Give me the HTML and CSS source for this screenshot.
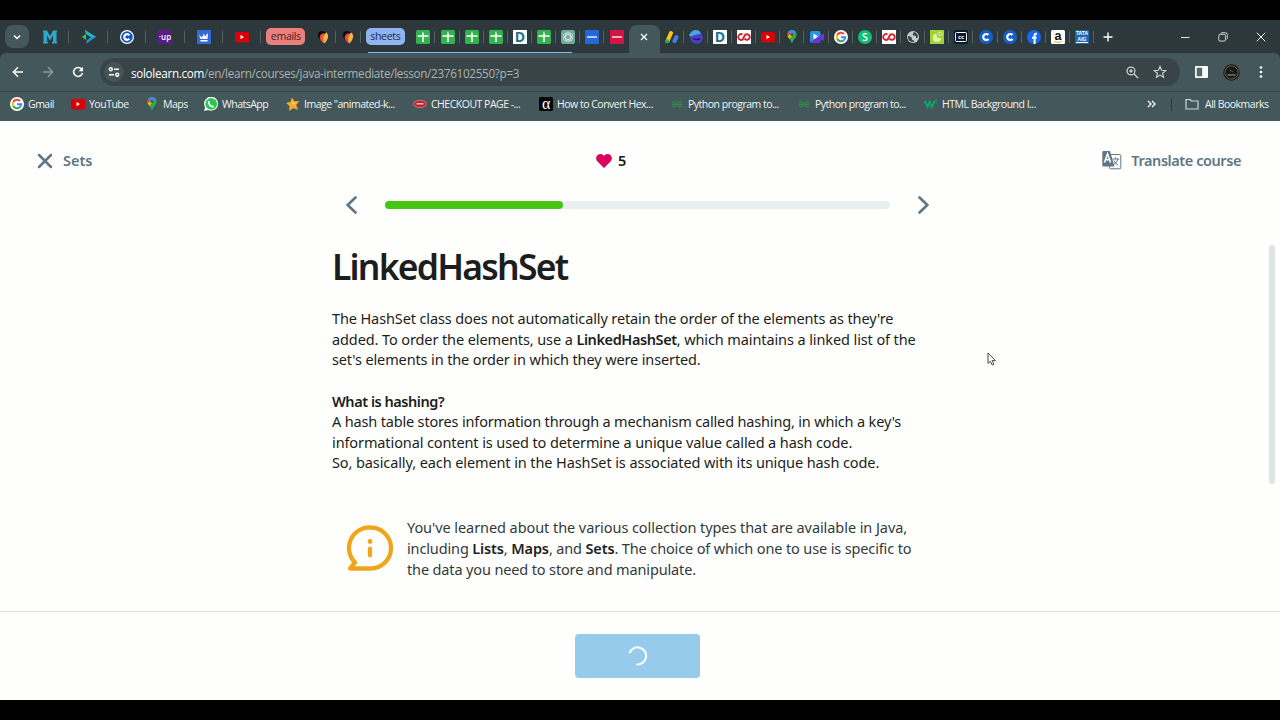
FILE: index.html
```html
<!DOCTYPE html>
<html lang="en">
<head>
  <meta charset="UTF-8" />
  <meta name="viewport" content="width=device-width, initial-scale=1" />
  <title>LinkedHashSet</title>
  <link rel="stylesheet" href="styles.css">
</head>
<body>

  <!-- shared icons -->
  <svg class="defs" width="0" height="0">
    <symbol id="sheet" viewBox="0 0 14 14">
      <rect width="14" height="14" rx="1.5" fill="#34b24e"/>
      <path d="M7 2.500v9.500M1.500 5.900h11" stroke="#fff" stroke-width="1.500"/>
    </symbol>
    <symbol id="co" viewBox="0 0 14 14">
      <rect width="14" height="14" fill="#fff"/>
      <path d="M5.500 4.300A3 3 0 1 0 5.500 9.700L8 5A2.800 2.800 0 1 1 7.600 8.600" fill="none" stroke="#d5222b" stroke-width="1.900"/>
    </symbol>
    <symbol id="yt" viewBox="0 0 14 14">
      <rect y="2" width="14" height="10.400" rx="1.500" fill="#d90007"/>
      <path d="M5.500 5v4.200L9 7.100z" fill="#fff"/>
    </symbol>
    <symbol id="pin" viewBox="0 0 14 14">
      <path d="M7 0a4.600 4.600 0 0 0-4.600 4.600C2.400 8 6 9.500 7 14c1-4.500 4.600-6 4.600-9.400A4.600 4.600 0 0 0 7 0z" fill="#34a853"/>
      <path d="M7 0a4.600 4.600 0 0 0-4 2.300L7 5l3.800-3A4.600 4.600 0 0 0 7 0z" fill="#4285f4"/>
      <path d="M3 2.300a4.600 4.600 0 0 0-.3 4L5.600 3.900z" fill="#ea4335"/>
      <path d="M2.700 6.300c.3.900 1 1.700 1.600 2.500L9 4.500 7 3z" fill="#fbbc04"/>
      <circle cx="7" cy="4.600" r="1.600" fill="#41575a"/>
    </symbol>
    <symbol id="google" viewBox="0 0 14 14">
      <circle cx="7" cy="7" r="7" fill="#fff"/>
      <g fill="none" stroke-width="2">
        <path d="M10 4A4.200 4.200 0 0 0 3.300 5" stroke="#ea4335"/>
        <path d="M3.300 5a4.200 4.200 0 0 0 0 4" stroke="#fbbc04"/>
        <path d="M3.300 9A4.200 4.200 0 0 0 9.800 10.200" stroke="#34a853"/>
        <path d="M9.800 10.200A4.200 4.200 0 0 0 11.200 7.200H7" stroke="#4285f4"/>
      </g>
    </symbol>
    <symbol id="flame" viewBox="0 0 14 14">
      <path d="M6 11C1 8 1 3 4 1.500c2-1 4-.5 5 1z" fill="#090909"/>
      <path d="M8 13.500C2.500 9.500 3 6 5.500 4c1.500-1 3-1 4 1l-1 6z" fill="#e94f3d"/>
      <path d="M8.300 13.500C6.500 9 7 5 10.500 2.500c3 3 1.500 7.500-2.200 11z" fill="#f6b73e"/>
    </symbol>
    <symbol id="cc" viewBox="0 0 14 14">
      <circle cx="7" cy="7" r="7" fill="#1560c8"/>
      <path d="M9.500 5A3 3 0 1 0 9.500 9" fill="none" stroke="#fff" stroke-width="2.200"/>
    </symbol>
    <symbol id="gfg" viewBox="0 0 14 14">
      <path d="M2.200 5.600Q3.200 4.600 4.600 5T6.400 7.300H1.600M2 9.300q3.500 1.300 4.400-2M11.800 5.600Q10.800 4.600 9.400 5T7.600 7.300h4.800M12 9.300q-3.500 1.300-4.400-2" fill="none" stroke="#2f8d46" stroke-width="1.200"/>
    </symbol>
  </svg>

  <div class="browser">
    <div class="tabstrip">
      <div class="tab-search"><svg width="10" height="10" viewBox="0 0 10 10"><path d="M2 3.500l3 3 3-3" fill="none" stroke="#fff" stroke-width="1.500"/></svg></div>

      <div class="pinned">
        <div class="tab"><svg viewBox="0 0 14 14"><path d="M0 .5h4L7 6l3-5.500h4V2.300h-.5v9.400h.5v1.800H9V11.700h1V5.500L7 10.500 4 5.500v6.200h1v1.800H0v-1.800h.5V2.300H0z" fill="#2fa7c6"/></svg></div>
        <div class="tab"><svg viewBox="0 0 14 14"><path d="M3 0l11 7L4 14l1-4 4-3-5-3z" fill="#1f8fd0"/><path d="M3 0l11 7H9L4 4z" fill="#27b5c0"/><path d="M0 7l4-3v6z" fill="#37cf4b"/></svg></div>
        <div class="tab"><svg viewBox="0 0 14 14"><circle cx="7" cy="7" r="7" fill="#fff"/><circle cx="7" cy="7" r="5.800" fill="#1652c4"/><path d="M9.300 5.300A2.800 2.800 0 1 0 9.300 8.700" fill="none" stroke="#fff" stroke-width="2.200"/></svg></div>
        <div class="tab"><svg viewBox="0 0 14 14"><rect width="14" height="14" fill="#5b1a86"/><text x="7" y="9.500" text-anchor="middle" font-size="8" font-weight="600" fill="#fff">·up</text></svg></div>
        <div class="tab"><svg viewBox="0 0 14 14"><rect width="14" height="14" fill="#3668d6"/><path d="M2 4.500l3 3 2-4 1 3 3-3.500L10.500 9h-7zM3.500 10h7v1.500h-7z" fill="#fff"/></svg></div>
        <div class="tab"><svg viewBox="0 0 14 14"><use href="#yt"/></svg></div>
      </div>

      <div class="chip chip-red">emails</div>
      <div class="group">
        <div class="tab"><svg viewBox="0 0 14 14"><use href="#flame"/></svg></div>
        <div class="tab"><svg viewBox="0 0 14 14"><use href="#flame"/></svg></div>
      </div>

      <div class="chip chip-blue">sheets</div>
      <div class="group sheets">
        <div class="tab"><svg viewBox="0 0 14 14"><use href="#sheet"/></svg></div>
        <div class="tab"><svg viewBox="0 0 14 14"><use href="#sheet"/></svg></div>
        <div class="tab"><svg viewBox="0 0 14 14"><use href="#sheet"/></svg></div>
        <div class="tab"><svg viewBox="0 0 14 14"><use href="#sheet"/></svg></div>
        <div class="tab"><div class="letter-d">D</div></div>
        <div class="tab"><svg viewBox="0 0 14 14"><use href="#sheet"/></svg></div>
        <div class="tab"><svg viewBox="0 0 14 14"><rect width="14" height="14" rx="2" fill="#74aa9c"/><g fill="none" stroke="#e4f2ee" stroke-width=".7"><ellipse cx="7" cy="7" rx="2.400" ry="5"/><ellipse cx="7" cy="7" rx="2.400" ry="5" transform="rotate(60 7 7)"/><ellipse cx="7" cy="7" rx="2.400" ry="5" transform="rotate(120 7 7)"/></g></svg></div>
        <div class="tab"><svg viewBox="0 0 14 14"><rect width="14" height="14" rx="1" fill="#2368d8"/><path d="M2 7h10" stroke="#d5e5ff" stroke-width="1.600"/></svg></div>
        <div class="tab last"><svg viewBox="0 0 14 14"><rect width="14" height="14" rx="1" fill="#d21447"/><path d="M2 7h10" stroke="#ffd5df" stroke-width="1.600"/></svg></div>
      </div>

      <div class="tab-active"><svg width="8" height="8" viewBox="0 0 8 8"><path d="M1 1l6 6M7 1L1 7" stroke="#fff" stroke-width="1.300"/></svg></div>

      <div class="group rest">
        <div class="tab"><svg viewBox="0 0 14 14"><path d="M2.500 11L6 3" stroke="#fbc51c" stroke-width="4" stroke-linecap="round"/><path d="M9.500 11l2-4" stroke="#3f7ee8" stroke-width="4" stroke-linecap="round"/><circle cx="2.300" cy="11.300" r="2" fill="#34a853"/></svg></div>
        <div class="tab"><svg viewBox="0 0 14 14"><circle cx="7.500" cy="7.500" r="6.300" fill="#4a40c4"/><path d="M0 6c1-4 4-6 7-6 2 0 4 1 5 3-2 2-4 1-6 2-2 .5-3 2-6 1z" fill="#4aa4e4"/><path d="M4.500 8.500c2 1.500 4 1.500 6.500 0" stroke="#151c66" stroke-width="1.500" fill="none"/></svg></div>
        <div class="tab"><div class="letter-d">D</div></div>
        <div class="tab"><svg viewBox="0 0 14 14"><use href="#co"/></svg></div>
        <div class="tab"><svg viewBox="0 0 14 14"><use href="#yt"/></svg></div>
        <div class="tab"><svg viewBox="0 0 14 14"><use href="#pin"/></svg></div>
        <div class="tab"><svg viewBox="0 0 14 14"><rect y="1" width="10.500" height="12" rx="2" fill="#2795e0"/><path d="M1 13q-1-1 1-2l12-8v8l-3-1.500-1.500 3.500z" fill="#6a35d6"/><path d="M3.500 3.500v6L8 6.500z" fill="#fff"/></svg></div>
        <div class="tab"><svg viewBox="0 0 14 14"><use href="#google"/></svg></div>
        <div class="tab"><svg viewBox="0 0 14 14"><circle cx="7" cy="7" r="7" fill="#13c073"/><text x="7" y="10.800" text-anchor="middle" font-size="10.500" font-weight="600" fill="#fff">S</text></svg></div>
        <div class="tab"><svg viewBox="0 0 14 14"><use href="#co"/></svg></div>
        <div class="tab"><svg viewBox="0 0 14 14"><circle cx="7" cy="7" r="6" fill="#c3cbcc"/><path d="M7 2c2 1-1 1.500 0 3s3 0 3 2 1 1 2 0c0-3-2-5-5-5zM2 6c2 0 4 1 4 3s2 0 2 3C4 12 1.500 10 2 6z" fill="#38474a"/></svg></div>
        <div class="tab"><svg viewBox="0 0 14 14"><rect width="14" height="14" fill="#a2d13a"/><path d="M6.500 3.500a4.300 4.300 0 1 0 4.800 4.800L7 7.500z" fill="#e2f4a4"/><circle cx="10.300" cy="3.700" r="1.700" fill="none" stroke="#e2f4a4"/></svg></div>
        <div class="tab"><svg viewBox="0 0 14 14"><rect width="14" height="14" rx="2" fill="#0b1a33"/><rect x="1.500" y="2.500" width="11" height="9" rx="1" fill="none" stroke="#fff"/><text x="7" y="9" text-anchor="middle" font-size="6" font-weight="700" fill="#fff">cc</text></svg></div>
        <div class="tab"><svg viewBox="0 0 14 14"><use href="#cc"/></svg></div>
        <div class="tab"><svg viewBox="0 0 14 14"><use href="#cc"/></svg></div>
        <div class="tab"><svg viewBox="0 0 14 14"><circle cx="7" cy="7" r="7" fill="#1668ee"/><path d="M10 3.800H9c-1.200 0-1.400.7-1.400 1.600V14M5 7.700h4.600" fill="none" stroke="#fff" stroke-width="2"/></svg></div>
        <div class="tab"><svg viewBox="0 0 14 14"><rect width="14" height="14" rx="1.500" fill="#fff"/><text class="small-logo" x="7" y="10" text-anchor="middle" font-size="12.500" font-weight="700" fill="#111">a</text><path d="M3 11.500q4 2 8 0" fill="none" stroke="#f2a73a"/></svg></div>
        <div class="tab"><svg viewBox="0 0 14 14"><rect width="14" height="14" fill="#1f68ad"/><text class="small-logo" text-anchor="middle" font-size="5" font-weight="700" fill="#fff"><tspan x="7" y="5">TATA</tspan><tspan x="7" y="10.600">AIG</tspan></text><path d="M1 12.500h12" stroke="#fff"/></svg></div>
      </div>

      <svg class="new-tab" width="10" height="10" viewBox="0 0 10 10"><path d="M5 .5v9M.5 5h9" stroke="#fff" stroke-width="1.400"/></svg>

      <div class="window-controls">
        <svg width="10" height="10" viewBox="0 0 10 10"><path d="M1 5.500h8.500" stroke="#dfe5e5"/></svg>
        <svg width="10" height="10" viewBox="0 0 10 10" fill="none" stroke="#dfe5e5" stroke-width=".9"><rect x=".8" y="2.300" width="6.600" height="6.800" rx="1.200"/><path d="M2.800 1.500q.3-.8 1.200-.8h3.500q1.800 0 1.800 1.800v3.700q0 .9-.8 1.200"/></svg>
        <svg width="10" height="10" viewBox="0 0 10 10"><path d="M.8.800l8.400 8.400M9.200.8L.8 9.200" stroke="#edf1f1"/></svg>
      </div>
    </div>

    <div class="toolbar">
      <div class="nav-buttons">
        <svg viewBox="0 0 12 12"><path d="M11 6H1.500M6 1.200L1.300 6 6 10.800" fill="none" stroke="#fff" stroke-width="1.400"/></svg>
        <svg viewBox="0 0 12 12"><path d="M1 6h9.500M6 1.200L10.700 6 6 10.800" fill="none" stroke="#8c999a" stroke-width="1.400"/></svg>
        <svg viewBox="0 0 12 12"><path d="M9.800 3.300A4.500 4.500 0 1 0 10.500 7" fill="none" stroke="#fff" stroke-width="1.500"/><path d="M11 .8v4.400H6.600z" fill="#fff"/></svg>
      </div>
      <div class="omnibox">
        <div class="site-info"><svg width="12" height="12" viewBox="0 0 12 12" fill="none" stroke="#fff" stroke-width="1.400"><circle cx="2.800" cy="3.300" r="1.500"/><path d="M6 3.300h5M1 8.700h5"/><circle cx="9.200" cy="8.700" r="1.500"/></svg></div>
        <div class="url"><span>sololearn.com</span>/en/learn/courses/java-intermediate/lesson/2376102550?p=3</div>
        <svg class="zoom-icon" width="13" height="13" viewBox="0 0 13 13" fill="none" stroke="#cad1d2" stroke-width="1.300"><circle cx="5" cy="5" r="3.900"/><path d="M8 8l4.300 4.300M5 3.300v3.400M3.300 5h3.400"/></svg>
        <svg width="14" height="14" viewBox="0 0 14 14"><path d="M7 1.500l1.600 3.800 4.200.3-3.200 2.700 1 4L7 10.100l-3.600 2.200 1-4L1.200 5.600l4.200-.3z" fill="none" stroke="#cad1d2" stroke-width="1.200"/></svg>
      </div>
      <div class="actions">
        <svg width="13" height="12" viewBox="0 0 13 12"><rect width="13" height="12" rx="1" fill="#fff"/><rect x="1.700" y="1.700" width="5.500" height="8.600" fill="#53676b"/></svg>
        <svg width="17" height="17" viewBox="0 0 17 17"><circle cx="8.500" cy="8.500" r="8.200" fill="#17191a"/><circle cx="8.500" cy="8.500" r="6.600" fill="none" stroke="#71682c"/><path d="M4.500 11h8" stroke="#a8a68a"/><path d="M7 6l3 2" stroke="#625d2c"/></svg>
        <svg width="4" height="12" viewBox="0 0 4 12" fill="#fff"><circle cx="2" cy="1.500" r="1.300"/><circle cx="2" cy="6" r="1.300"/><circle cx="2" cy="10.500" r="1.300"/></svg>
      </div>
    </div>

    <div class="bookmarks">
      <div class="bookmark"><svg viewBox="0 0 14 14"><use href="#google"/></svg>Gmail</div>
      <div class="bookmark"><svg viewBox="0 0 14 14"><use href="#yt"/></svg>YouTube</div>
      <div class="bookmark"><svg viewBox="0 0 14 14"><use href="#pin"/></svg>Maps</div>
      <div class="bookmark"><svg viewBox="0 0 14 14"><path d="M0 14l1.200-3.500A7 7 0 1 1 4 13z" fill="#fff"/><circle cx="7.200" cy="6.900" r="5.900" fill="#2bc54f"/><path d="M4.800 4c-1 3 2 6 5 5.600" fill="none" stroke="#fff" stroke-width="1.800"/></svg>WhatsApp</div>
      <div class="bookmark"><svg viewBox="0 0 14 14"><path d="M6 .5l2.400 3.700 5-.2-3.200 4 1.800 4.800-4.800-1.500-4 2.700.2-5L0 6l4.500-1.200z" fill="#f5ad29"/><path d="M6 3l1.500 3 3 .3-4 1.500z" fill="#ffd969"/></svg>Image "animated-k...</div>
      <div class="bookmark"><svg viewBox="0 0 14 14"><ellipse cx="7" cy="7" rx="6.700" ry="4" fill="#d9868d"/><ellipse cx="7" cy="7" rx="6" ry="3.300" fill="#c3202c"/><path d="M3.500 6.800h7" stroke="#f0c5c9" stroke-width="1.400"/></svg>CHECKOUT PAGE -...</div>
      <div class="bookmark"><div class="alpha">α</div>How to Convert Hex...</div>
      <div class="bookmark"><svg viewBox="0 0 14 14"><use href="#gfg"/></svg><span class="pull">Python program to...</span></div>
      <div class="bookmark"><svg viewBox="0 0 14 14"><use href="#gfg"/></svg><span class="pull">Python program to...</span></div>
      <div class="bookmark"><svg viewBox="0 0 14 14"><path d="M.8 4l2.700 6 2-5 2.300 5L10.500 4" fill="none" stroke="#0aa66b" stroke-width="2"/><path d="M11 3h2l-1 1.500q1.500.5 0 2" fill="none" stroke="#0aa66b" stroke-width=".8"/></svg>HTML Background I...</div>
      <svg class="more" width="9" height="8" viewBox="0 0 9 8"><path d="M1 1l3 3-3 3M5 1l3 3-3 3" fill="none" stroke="#fff" stroke-width="1.300"/></svg>
      <div class="divider"></div>
      <div class="bookmark all"><svg viewBox="0 0 14 14"><path d="M1 2.500h4L6.500 4H13v8H1z" fill="none" stroke="#d3dadb" stroke-width="1.200"/></svg>All Bookmarks</div>
    </div>

    <div class="page">
      <div class="course-header">
        <div class="back">
          <svg width="16" height="16" viewBox="0 0 16 16"><path d="M2 2l12 12M14 2L2 14" stroke="#607585" stroke-width="2.500" stroke-linecap="round"/></svg>
          <span>Sets</span>
        </div>
        <div class="hearts">
          <svg width="16" height="14" viewBox="0 0 16 14"><path d="M8 14L1.500 7.500C-1.500 4 1 0 4.500 0 6 0 7.300.8 8 2c.7-1.200 2-2 3.500-2C15 0 17.500 4 14.500 7.500z" fill="#d9035b"/></svg>
          <span>5</span>
        </div>
        <div class="translate">
          <svg width="20" height="19" viewBox="0 0 20 19"><rect x="7.500" y="3.500" width="11.300" height="14.300" rx="1" fill="none" stroke="#607585"/><path d="M1.500 0H8l4.500 15.500h-11Q.3 15.500.3 14V1.500Q.3 0 1.500 0z" fill="#607585"/><path d="M2.500 11.500l3-8.500 3 8.500M3.700 8.800h3.700" fill="none" stroke="#fefffa" stroke-width="1.600"/><path d="M10.500 8h6.500M13.500 6.500V8M16 8q-1 4-5 6M12 9.500q1 3 4 4.500" fill="none" stroke="#607585"/></svg>
          <span>Translate course</span>
        </div>
      </div>

      <div class="progress-row">
        <svg width="12" height="18" viewBox="0 0 12 18"><path d="M9.500 1.500L1.700 9l7.800 7.500" fill="none" stroke="#607585" stroke-width="2.600" stroke-linecap="round"/></svg>
        <div class="progress"><div class="progress-fill"></div></div>
        <svg width="12" height="18" viewBox="0 0 12 18"><path d="M2.500 1.500L10.300 9l-7.800 7.500" fill="none" stroke="#607585" stroke-width="2.600" stroke-linecap="round"/></svg>
      </div>

      <div class="lesson">
        <h1>LinkedHashSet</h1>
        <p>
          <span class="line l1">The HashSet class does not automatically retain the order of the elements as they're</span>
          <span class="line l2">added. To order the elements, use a <b>LinkedHashSet</b>, which maintains a linked list of the</span>
          <span class="line l3">set's elements in the order in which they were inserted.</span>
        </p>
        <p>
          <span class="line l4"><b>What is hashing?</b></span>
          <span class="line l5">A hash table stores information through a mechanism called hashing, in which a key's</span>
          <span class="line l6">informational content is used to determine a unique value called a hash code.</span>
          <span class="line l7">So, basically, each element in the HashSet is associated with its unique hash code.</span>
        </p>
        <div class="note">
          <svg width="48" height="48" viewBox="0 0 48 48"><path d="M24.500 3.500A20.500 20.500 0 1 1 24.500 44.500H4L9 38.500A20.500 20.500 0 0 1 24.500 3.500z" fill="none" stroke="#f0a51f" stroke-width="4.300" stroke-linejoin="round"/><circle cx="24" cy="17.500" r="2.400" fill="#f0a51f"/><path d="M24 24.500v7" fill="none" stroke="#f0a51f" stroke-width="4.200" stroke-linecap="round"/></svg>
          <p>
            <span class="line l8">You've learned about the various collection types that are available in Java,</span>
            <span class="line l9">including <b>Lists</b>, <b>Maps</b>, and <b>Sets</b>. The choice of which one to use is specific to</span>
            <span class="line l10">the data you need to store and manipulate.</span>
          </p>
        </div>
      </div>

      <div class="footer">
        <button type="button" aria-label="Loading"><svg width="20" height="20" viewBox="0 0 20 20"><path d="M1.600 7.200A8.500 8.500 0 1 1 8.500 18.300" fill="none" stroke="#fefffa" stroke-width="2"/></svg></button>
      </div>

      <div class="scroll-thumb"></div>
      <svg class="cursor" width="10" height="14" viewBox="0 0 10 14"><path d="M1 1v10.500l2.400-2.200 1.800 3.800 1.700-.8-1.700-3.700h3.300z" fill="#fff" stroke="#333" stroke-width=".9"/></svg>
    </div>
  </div>

</body>
</html>
```
FILE: styles.css
```css
* {
  box-sizing: border-box;
}

body {
  margin: 0;
  padding: 20px 0;
  height: 720px;
  overflow: hidden;
  background: #000;
  font-family: "Open Sans", "Noto Sans", sans-serif;
}

svg {
  display: block;
  flex: none;
}

.defs {
  position: absolute;
}

.browser {
  height: 680px;
  display: flex;
  flex-direction: column;
  background: #2c383b;
}

/* tab strip */
.tabstrip {
  height: 33px;
  display: flex;
  align-items: center;
  padding-left: 5px;
}

.tab-search {
  width: 24px;
  height: 23px;
  margin-right: 2px;
  border-radius: 8px;
  background: #44575b;
  display: flex;
  align-items: center;
  justify-content: center;
}

.pinned, .group {
  display: flex;
  height: 33px;
}

.tab {
  width: 24.150px;
  display: flex;
  align-items: center;
  justify-content: center;
  background: linear-gradient(#536264, #536264) right center / 1px 12px no-repeat;
}

.pinned .tab {
  width: 38.400px;
}

.tab.last {
  background: none;
}

.tab svg {
  width: 14px;
  height: 14px;
}

.letter-d {
  width: 14px;
  height: 14px;
  background: #fff;
  color: #1b7288;
  font-size: 14px;
  font-weight: 700;
  line-height: 14px;
  text-align: center;
}

.small-logo {
  font-family: "Liberation Sans", sans-serif;
}

.chip {
  width: 39px;
  height: 17px;
  margin: 0 5.500px 0 5px;
  border-radius: 5px;
  font-size: 10.500px;
  line-height: 17px;
  text-align: center;
  letter-spacing: -0.300px;
}

.chip-red + .group .tab {
  width: 25px;
}

.chip-red {
  background: #ea7f7d;
  color: #3a2426;
}

.chip-blue {
  background: #90b4f2;
  color: #202c44;
  margin-right: 6.500px;
}

/* group underline starts below the chip */
.group.sheets {
  margin-left: -43px;
  padding-left: 43px;
  background: linear-gradient(#90b4f2, #90b4f2) left bottom / 204px 1px no-repeat;
}

.tab-active {
  align-self: flex-end;
  width: 31px;
  height: 28px;
  padding-bottom: 4px;
  border-radius: 8px 8px 0 0;
  background: #44575b;
  display: flex;
  align-items: center;
  justify-content: center;
}

.new-tab {
  margin-left: 9px;
}

.window-controls {
  margin-left: auto;
  margin-right: 14px;
  display: flex;
  gap: 28px;
}

/* toolbar */
.toolbar {
  height: 38px;
  display: flex;
  align-items: center;
  background: #44575b;
  border-radius: 6px 6px 0 0;
}

.nav-buttons {
  display: flex;
  gap: 18px;
  padding-left: 12px;
  width: 100px;
}

.nav-buttons svg {
  width: 12px;
  height: 12px;
}

.omnibox {
  width: 1080px;
  height: 28px;
  display: flex;
  align-items: center;
  padding: 0 13px 0 4px;
  border-radius: 14px;
  background: #384447;
}

.site-info {
  width: 20px;
  height: 20px;
  border-radius: 50%;
  background: #475457;
  display: flex;
  align-items: center;
  justify-content: center;
}

.url {
  margin-left: 7px;
  padding-top: 1px;
  font-size: 11.700px;
  color: #aab2b3;
  letter-spacing: -0.310px;
}

.url span {
  color: #fff;
}

.zoom-icon {
  margin-left: auto;
  margin-right: 14px;
}

.actions {
  display: flex;
  align-items: center;
  gap: 15px;
  padding-left: 15px;
}

.actions svg:last-child {
  margin-left: 4px;
}

/* bookmarks bar */
.bookmarks {
  height: 30px;
  display: grid;
  grid-template-columns: 61px 74px 59px 82px 127px 126px 132px 127px 126px 223px 24px 14px 1fr;
  align-items: center;
  padding: 0 0 5px 10px;
  background: #44575b;
  border-top: 1px solid #35464a;
}

.bookmark {
  display: flex;
  align-items: center;
  gap: 4px;
  white-space: nowrap;
  font-size: 10.500px;
  line-height: 16px;
  letter-spacing: -0.500px;
  color: #f1f4f4;
}

.bookmark svg {
  width: 14px;
  height: 14px;
}

.bookmark svg:has(+ .pull) {
  margin-left: -1px;
}

.alpha {
  width: 14px;
  height: 14px;
  border-radius: 1.500px;
  background: #050505;
  color: #fff;
  font-family: "Liberation Serif", serif;
  font-size: 16px;
  line-height: 13px;
  text-align: center;
}

.bookmark.all {
  gap: 6px;
}

.divider {
  width: 1px;
  height: 13px;
  background: #2c3a3d;
}

/* lesson page */
.page {
  position: relative;
  flex: 1;
  display: flex;
  flex-direction: column;
  background: #fefffc;
  font-family: "Noto Sans", "Open Sans", sans-serif;
}

.course-header {
  height: 79px;
  display: grid;
  grid-template-columns: 1fr 60px 1fr;
  align-items: center;
  padding: 0 39px 0 37px;
  font-size: 14.500px;
  font-weight: 600;
  color: #607585;
}

.back, .hearts, .translate {
  display: flex;
  align-items: center;
  line-height: 20px;
}

.back span, .translate span, .hearts span {
  padding-bottom: 2px;
}

.back {
  gap: 10px;
}

.hearts {
  gap: 6px;
  color: #14181c;
  margin-left: -13px;
}

.translate {
  gap: 9px;
  justify-content: flex-end;
  letter-spacing: -0.430px;
}

.progress-row {
  height: 10px;
  display: flex;
  align-items: center;
  margin-left: 346px;
}

.progress {
  width: 505px;
  height: 8px;
  margin: 0 27px;
  border-radius: 4px;
  background: #e8eff0;
}

.progress-fill {
  width: 178px;
  height: 8px;
  border-radius: 4px;
  background: #44c612;
}

.lesson {
  flex: 1;
  padding-left: 332px;
  color: #1c1d1c;
}

h1 {
  margin: 35px 0 20.300px;
  font-size: 35.500px;
  line-height: 43px;
  font-weight: 600;
  letter-spacing: -1.780px;
}

.lesson p {
  margin: 0 0 20.500px;
  font-size: 14.500px;
  line-height: 20.600px;
}

.line {
  display: block;
  white-space: nowrap;
  width: max-content;
}

.l1 { letter-spacing: -0.120px; }
.l2 { letter-spacing: -0.105px; }
.l3 { letter-spacing: -0.125px; }
.l4 { letter-spacing: -0.460px; }
.l5 { letter-spacing: -0.167px; }
.l6 { letter-spacing: -0.110px; }
.l7 { letter-spacing: -0.100px; }
.l8 { letter-spacing: -0.070px; }
.l9 { letter-spacing: -0.135px; }
.l10 { letter-spacing: -0.140px; }

.l2 b {
  letter-spacing: -0.400px;
}

b {
  font-weight: 600;
}

.note {
  display: flex;
  gap: 13px;
  align-items: center;
  margin-top: 44.500px;
  padding-left: 14px;
}

.note p {
  margin: 0;
  color: #33393d;
}

.note b {
  color: #1c2226;
}

.footer {
  height: 89px;
  display: flex;
  justify-content: center;
  padding: 22px 5px 0 0;
  border-top: 1px solid #dde2e2;
}

.footer button {
  width: 125px;
  height: 44px;
  padding: 0;
  border: none;
  border-radius: 4px;
  background: #96cbeb;
  display: flex;
  align-items: center;
  justify-content: center;
}

.scroll-thumb {
  position: absolute;
  top: 124px;
  right: 5px;
  width: 6px;
  height: 239px;
  border-radius: 3px;
  background: #dfe4e7;
}

.cursor {
  position: absolute;
  left: 987px;
  top: 231px;
}
```
